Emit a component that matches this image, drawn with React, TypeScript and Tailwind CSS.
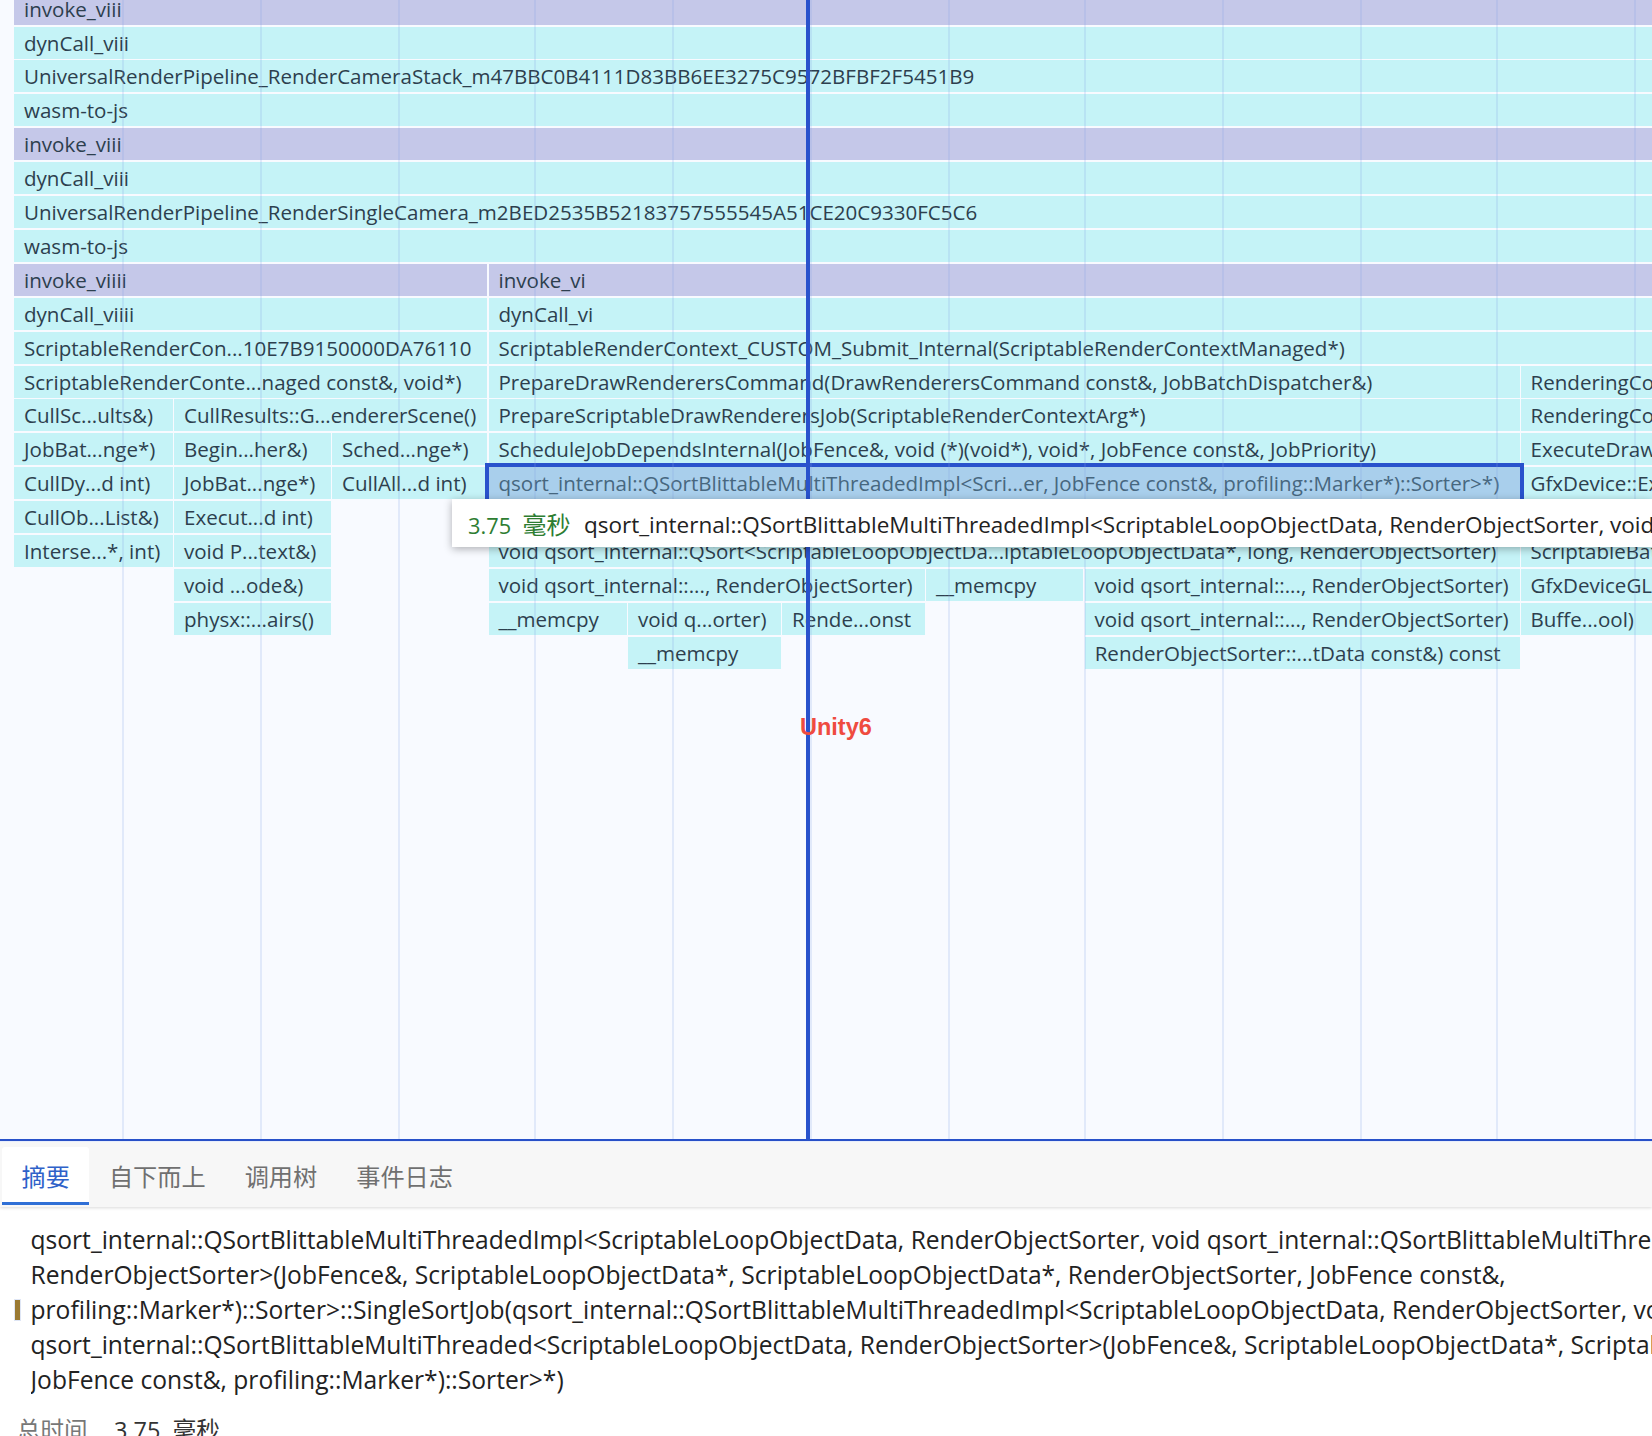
const FONT = "font-['Open_Sans','Noto_Sans_CJK_SC',sans-serif]"

function Row({ children }: { children: React.ReactNode }) {
  return <div className="flex h-[32px] mb-[1.9px]">{children}</div>
}

function Cell({ className, children }: { className: string; children?: React.ReactNode }) {
  return (
    <div className={`h-full shrink-0 overflow-hidden whitespace-nowrap pl-[10px] leading-[32.5px] text-[#2d3f4e] ${className}`}>
      {children}
    </div>
  )
}

const cyan = "bg-[#c5f3f7]"
const purple = "bg-[#c5c8e9]"

function Tab({ label, active }: { label: string; active?: boolean }) {
  return (
    <div
      className={
        active
          ? "h-[58px] px-[19.5px] pt-[12px] text-[24.2px] leading-[36px] bg-white text-[#2f62c9] rounded-t-[3px] border-b-[3px] border-[#2f6fd6]"
          : "h-[58px] px-[19.5px] pt-[12px] text-[24.2px] leading-[36px] text-[#707070]"
      }
    >
      {label}
    </div>
  )
}

export default function App() {
  return (
    <div className={`w-[1652px] h-[1436px] overflow-hidden flex flex-col bg-white ${FONT}`}>
      {/* flame chart */}
      <div className="relative h-[1141px] shrink-0 overflow-hidden border-b-2 border-[#2952cc] bg-[#f8faff] pl-[14px] text-[20.55px]">
        <div className="-mt-[7.3px]">
          <Row><Cell className={`w-[1638px] ${purple}`}>invoke_viii</Cell></Row>
          <Row><Cell className={`w-[1638px] ${cyan}`}>dynCall_viii</Cell></Row>
          <Row><Cell className={`w-[1638px] ${cyan}`}>UniversalRenderPipeline_RenderCameraStack_m47BBC0B4111D83BB6EE3275C9572BFBF2F5451B9</Cell></Row>
          <Row><Cell className={`w-[1638px] ${cyan}`}>wasm-to-js</Cell></Row>
          <Row><Cell className={`w-[1638px] ${purple}`}>invoke_viii</Cell></Row>
          <Row><Cell className={`w-[1638px] ${cyan}`}>dynCall_viii</Cell></Row>
          <Row><Cell className={`w-[1638px] ${cyan}`}>UniversalRenderPipeline_RenderSingleCamera_m2BED2535B52183757555545A51CE20C9330FC5C6</Cell></Row>
          <Row><Cell className={`w-[1638px] ${cyan}`}>wasm-to-js</Cell></Row>

          <Row>
            <Cell className={`w-[473px] ${purple}`}>invoke_viiii</Cell>
            <Cell className={`ml-[1.5px] w-[1163.5px] ${purple}`}>invoke_vi</Cell>
          </Row>
          <Row>
            <Cell className={`w-[473px] ${cyan}`}>dynCall_viiii</Cell>
            <Cell className={`ml-[1.5px] w-[1163.5px] ${cyan}`}>dynCall_vi</Cell>
          </Row>
          <Row>
            <Cell className={`w-[473px] ${cyan}`}>ScriptableRenderCon...10E7B9150000DA76110</Cell>
            <Cell className={`ml-[1.5px] w-[1163.5px] ${cyan}`}>ScriptableRenderContext_CUSTOM_Submit_Internal(ScriptableRenderContextManaged*)</Cell>
          </Row>
          <Row>
            <Cell className={`w-[473px] ${cyan}`}>ScriptableRenderConte...naged const&amp;, void*)</Cell>
            <Cell className={`ml-[1.5px] w-[1031px] ${cyan}`}>PrepareDrawRenderersCommand(DrawRenderersCommand const&amp;, JobBatchDispatcher&amp;)</Cell>
            <Cell className={`ml-[1px] w-[131.5px] ${cyan}`}>RenderingCommand</Cell>
          </Row>
          <Row>
            <Cell className={`w-[158.5px] ${cyan}`}>CullSc...ults&amp;)</Cell>
            <Cell className={`ml-[1.5px] w-[313px] ${cyan}`}>CullResults::G...endererScene()</Cell>
            <Cell className={`ml-[1.5px] w-[1031px] ${cyan}`}>PrepareScriptableDrawRenderersJob(ScriptableRenderContextArg*)</Cell>
            <Cell className={`ml-[1px] w-[131.5px] ${cyan}`}>RenderingCommand</Cell>
          </Row>
          <Row>
            <Cell className={`w-[158.5px] ${cyan}`}>JobBat...nge*)</Cell>
            <Cell className={`ml-[1.5px] w-[157px] ${cyan}`}>Begin...her&amp;)</Cell>
            <Cell className={`ml-[1px] w-[155px] ${cyan}`}>Sched...nge*)</Cell>
            <Cell className={`ml-[1.5px] w-[1031px] ${cyan}`}>ScheduleJobDependsInternal(JobFence&amp;, void (*)(void*), void*, JobFence const&amp;, JobPriority)</Cell>
            <Cell className={`ml-[1px] w-[131.5px] ${cyan}`}>ExecuteDrawCommand</Cell>
          </Row>
          <Row>
            <Cell className={`w-[158.5px] ${cyan}`}>CullDy...d int)</Cell>
            <Cell className={`ml-[1.5px] w-[157px] ${cyan}`}>JobBat...nge*)</Cell>
            <Cell className={`ml-[1px] w-[155px] ${cyan}`}>CullAll...d int)</Cell>
            <Cell className="relative z-10 ml-[1.5px] w-[1031px] bg-[#a9cfec] !text-[#47677f] outline-4 outline-[#2952cc]">
              qsort_internal::QSortBlittableMultiThreadedImpl&lt;Scri...er, JobFence const&amp;, profiling::Marker*)::Sorter&gt;*)
            </Cell>
            <Cell className={`ml-[1px] w-[131.5px] ${cyan}`}>GfxDevice::Execute</Cell>
          </Row>
          <Row>
            <Cell className={`w-[158.5px] ${cyan}`}>CullOb...List&amp;)</Cell>
            <Cell className={`ml-[1.5px] w-[157px] ${cyan}`}>Execut...d int)</Cell>
            <Cell className={`ml-[156px] w-[1031px] ${cyan}`}></Cell>
            <Cell className={`ml-[1px] w-[131.5px] ${cyan}`}></Cell>
          </Row>
          <Row>
            <Cell className={`w-[158.5px] ${cyan}`}>Interse...*, int)</Cell>
            <Cell className={`ml-[1.5px] w-[157px] ${cyan}`}>void P...text&amp;)</Cell>
            <Cell className={`ml-[157.5px] w-[1031px] ${cyan}`}>void qsort_internal::QSort&lt;ScriptableLoopObjectDa...iptableLoopObjectData*, long, RenderObjectSorter)</Cell>
            <Cell className={`ml-[1px] w-[131.5px] ${cyan}`}>ScriptableBatch</Cell>
          </Row>
          <Row>
            <Cell className={`ml-[160px] w-[157px] ${cyan}`}>void ...ode&amp;)</Cell>
            <Cell className={`ml-[157.5px] w-[436px] ${cyan}`}>void qsort_internal::..., RenderObjectSorter)</Cell>
            <Cell className={`ml-[1.5px] w-[156.5px] ${cyan}`}>__memcpy</Cell>
            <Cell className={`ml-[2px] w-[435px] ${cyan}`}>void qsort_internal::..., RenderObjectSorter)</Cell>
            <Cell className={`ml-[1px] w-[131.5px] ${cyan}`}>GfxDeviceGLES</Cell>
          </Row>
          <Row>
            <Cell className={`ml-[160px] w-[157px] ${cyan}`}>physx::...airs()</Cell>
            <Cell className={`ml-[157.5px] w-[138.5px] ${cyan}`}>__memcpy</Cell>
            <Cell className={`ml-[1px] w-[153px] ${cyan}`}>void q...orter)</Cell>
            <Cell className={`ml-[1px] w-[142.5px] ${cyan}`}>Rende...onst</Cell>
            <Cell className={`ml-[160px] w-[435px] ${cyan}`}>void qsort_internal::..., RenderObjectSorter)</Cell>
            <Cell className={`ml-[1px] w-[131.5px] ${cyan}`}>Buffe...ool)</Cell>
          </Row>
          <Row>
            <Cell className={`ml-[614px] w-[153px] ${cyan}`}>__memcpy</Cell>
            <Cell className={`ml-[303.7px] w-[435px] ${cyan}`}>RenderObjectSorter::...tData const&amp;) const</Cell>
          </Row>
        </div>

        {/* time grid + cursor */}
        <svg className="absolute left-0 top-0 z-20 h-[1139px] w-[1652px]" viewBox="0 0 1652 1139">
          <g stroke="#7f9fe8" strokeOpacity="0.25" strokeWidth="1.5">
            <line x1="123" y1="0" x2="123" y2="1139" />
            <line x1="261" y1="0" x2="261" y2="1139" />
            <line x1="399" y1="0" x2="399" y2="1139" />
            <line x1="535" y1="0" x2="535" y2="1139" />
            <line x1="673" y1="0" x2="673" y2="1139" />
            <line x1="811" y1="0" x2="811" y2="1139" />
            <line x1="949" y1="0" x2="949" y2="1139" />
            <line x1="1085" y1="0" x2="1085" y2="1139" />
            <line x1="1223" y1="0" x2="1223" y2="1139" />
            <line x1="1361" y1="0" x2="1361" y2="1139" />
            <line x1="1497" y1="0" x2="1497" y2="1139" />
            <line x1="1635" y1="0" x2="1635" y2="1139" />
          </g>
          <rect x="806" y="0" width="4" height="1139" fill="#2952cc" />
        </svg>

        {/* hover tooltip */}
        <div className="absolute left-[452px] right-0 top-[499px] z-30 flex h-[48px] items-center overflow-hidden whitespace-nowrap bg-white pl-[16px] pt-[3px] text-[22.5px] text-[#222] shadow-[0_2px_8px_rgba(0,0,0,0.3)]">
          <span className="w-[116px] shrink-0 text-[21.8px] text-[#2e7d32]">3.75&nbsp;&nbsp;<span className="text-[24px]">毫秒</span></span>
          <span>qsort_internal::QSortBlittableMultiThreadedImpl&lt;ScriptableLoopObjectData, RenderObjectSorter, void qsort_internal</span>
        </div>

        <div className="absolute left-[800px] top-[713px] z-20 font-['Liberation_Sans',sans-serif] text-[23.5px] font-bold leading-[28px] text-[#ef4b3f]">
          Unity6
        </div>
      </div>

      {/* tabs */}
      <div className="relative z-10 flex h-[66px] shrink-0 items-start border-t border-[#e8eefc] bg-[#f7f7f7] pl-[2px] pt-[5px] shadow-[0_1px_3px_rgba(0,0,0,0.15)]">
        <Tab label="摘要" active />
        <Tab label="自下而上" />
        <Tab label="调用树" />
        <Tab label="事件日志" />
      </div>

      {/* summary */}
      <div className="flex items-center pl-[14px] pt-[15px]">
        <div className="h-[22px] w-[7px] shrink-0 border border-[#dfe6f5] bg-[#9b7a32]" />
        <div className="ml-[9.5px] min-w-0 flex-1 overflow-hidden whitespace-nowrap text-[24.6px] leading-[35px] text-[#222]">
          <div>qsort_internal::QSortBlittableMultiThreadedImpl&lt;ScriptableLoopObjectData, RenderObjectSorter, void qsort_internal::QSortBlittableMultiThreadedImpl</div>
          <div>RenderObjectSorter&gt;(JobFence&amp;, ScriptableLoopObjectData*, ScriptableLoopObjectData*, RenderObjectSorter, JobFence const&amp;,</div>
          <div>profiling::Marker*)::Sorter&gt;::SingleSortJob(qsort_internal::QSortBlittableMultiThreadedImpl&lt;ScriptableLoopObjectData, RenderObjectSorter, void qsort_internal</div>
          <div>qsort_internal::QSortBlittableMultiThreaded&lt;ScriptableLoopObjectData, RenderObjectSorter&gt;(JobFence&amp;, ScriptableLoopObjectData*, ScriptableLoopObjectData*</div>
          <div>JobFence const&amp;, profiling::Marker*)::Sorter&gt;*)</div>
        </div>
      </div>
      <div className="mt-[16px] flex pl-[17px] text-[23.5px] leading-[34px]">
        <span className="w-[97px] text-[#777]">总时间</span>
        <span className="text-[#333]">3.75&nbsp;&nbsp;毫秒</span>
      </div>
    </div>
  )
}
